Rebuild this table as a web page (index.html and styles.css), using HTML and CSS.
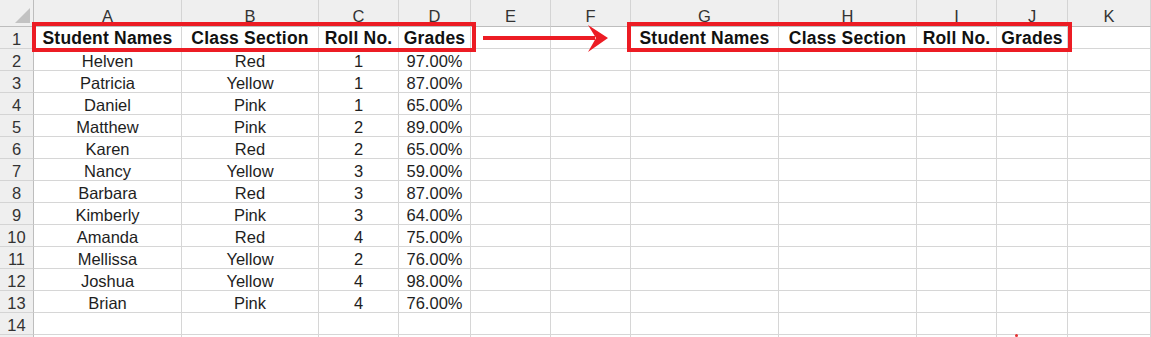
FILE: index.html
```html
<!DOCTYPE html>
<html>
<head>
<meta charset="utf-8">
<link rel="stylesheet" href="styles.css">
</head>
<body>
<div class="sheet">
  <div class="row colhdr">
    <div class="c corner"><span class="tri"></span></div>
    <div class="c">A</div><div class="c">B</div><div class="c">C</div><div class="c">D</div><div class="c">E</div><div class="c">F</div><div class="c">G</div><div class="c">H</div><div class="c">I</div><div class="c">J</div><div class="c">K</div>
  </div>
  <div class="row head">
    <div class="c rn">1</div>
    <div class="c">Student Names</div><div class="c">Class Section</div><div class="c">Roll No.</div><div class="c">Grades</div><div class="c"></div><div class="c"></div><div class="c">Student Names</div><div class="c">Class Section</div><div class="c">Roll No.</div><div class="c">Grades</div><div class="c"></div>
  </div>
  <div class="row"><div class="c rn">2</div><div class="c">Helven</div><div class="c">Red</div><div class="c">1</div><div class="c">97.00%</div><div class="c"></div><div class="c"></div><div class="c"></div><div class="c"></div><div class="c"></div><div class="c"></div><div class="c"></div></div>
  <div class="row"><div class="c rn">3</div><div class="c">Patricia</div><div class="c">Yellow</div><div class="c">1</div><div class="c">87.00%</div><div class="c"></div><div class="c"></div><div class="c"></div><div class="c"></div><div class="c"></div><div class="c"></div><div class="c"></div></div>
  <div class="row"><div class="c rn">4</div><div class="c">Daniel</div><div class="c">Pink</div><div class="c">1</div><div class="c">65.00%</div><div class="c"></div><div class="c"></div><div class="c"></div><div class="c"></div><div class="c"></div><div class="c"></div><div class="c"></div></div>
  <div class="row"><div class="c rn">5</div><div class="c">Matthew</div><div class="c">Pink</div><div class="c">2</div><div class="c">89.00%</div><div class="c"></div><div class="c"></div><div class="c"></div><div class="c"></div><div class="c"></div><div class="c"></div><div class="c"></div></div>
  <div class="row"><div class="c rn">6</div><div class="c">Karen</div><div class="c">Red</div><div class="c">2</div><div class="c">65.00%</div><div class="c"></div><div class="c"></div><div class="c"></div><div class="c"></div><div class="c"></div><div class="c"></div><div class="c"></div></div>
  <div class="row"><div class="c rn">7</div><div class="c">Nancy</div><div class="c">Yellow</div><div class="c">3</div><div class="c">59.00%</div><div class="c"></div><div class="c"></div><div class="c"></div><div class="c"></div><div class="c"></div><div class="c"></div><div class="c"></div></div>
  <div class="row"><div class="c rn">8</div><div class="c">Barbara</div><div class="c">Red</div><div class="c">3</div><div class="c">87.00%</div><div class="c"></div><div class="c"></div><div class="c"></div><div class="c"></div><div class="c"></div><div class="c"></div><div class="c"></div></div>
  <div class="row"><div class="c rn">9</div><div class="c">Kimberly</div><div class="c">Pink</div><div class="c">3</div><div class="c">64.00%</div><div class="c"></div><div class="c"></div><div class="c"></div><div class="c"></div><div class="c"></div><div class="c"></div><div class="c"></div></div>
  <div class="row"><div class="c rn">10</div><div class="c">Amanda</div><div class="c">Red</div><div class="c">4</div><div class="c">75.00%</div><div class="c"></div><div class="c"></div><div class="c"></div><div class="c"></div><div class="c"></div><div class="c"></div><div class="c"></div></div>
  <div class="row"><div class="c rn">11</div><div class="c">Mellissa</div><div class="c">Yellow</div><div class="c">2</div><div class="c">76.00%</div><div class="c"></div><div class="c"></div><div class="c"></div><div class="c"></div><div class="c"></div><div class="c"></div><div class="c"></div></div>
  <div class="row"><div class="c rn">12</div><div class="c">Joshua</div><div class="c">Yellow</div><div class="c">4</div><div class="c">98.00%</div><div class="c"></div><div class="c"></div><div class="c"></div><div class="c"></div><div class="c"></div><div class="c"></div><div class="c"></div></div>
  <div class="row"><div class="c rn">13</div><div class="c">Brian</div><div class="c">Pink</div><div class="c">4</div><div class="c">76.00%</div><div class="c"></div><div class="c"></div><div class="c"></div><div class="c"></div><div class="c"></div><div class="c"></div><div class="c"></div></div>
  <div class="row"><div class="c rn">14</div><div class="c"></div><div class="c"></div><div class="c"></div><div class="c"></div><div class="c"></div><div class="c"></div><div class="c"></div><div class="c"></div><div class="c"></div><div class="c"></div><div class="c"></div></div>
  <div class="row"><div class="c rn"></div><div class="c"></div><div class="c"></div><div class="c"></div><div class="c"></div><div class="c"></div><div class="c"></div><div class="c"></div><div class="c"></div><div class="c"></div><div class="c"></div><div class="c"></div></div>

  <div class="box box-src"></div>
  <div class="box box-dst"></div>
  <svg class="arrow" width="132" height="34" viewBox="0 0 132 34">
    <rect x="3" y="14" width="112" height="4" fill="#ec1c24"/>
    <polygon points="108,3 128,16 108,30 116,16" fill="#ec1c24"/>
  </svg>
  <span class="dot"></span>
</div>
</body>
</html>
```
FILE: styles.css
```css
html, body {
  margin: 0;
  padding: 0;
  background: #ffffff;
}
.sheet {
  position: relative;
  width: 1151px;
  height: 337px;
  overflow: hidden;
  font-family: "Liberation Sans", Arial, sans-serif;
  font-size: 16.5px;
  color: #1e1e1e;
}
.row {
  display: grid;
  grid-template-columns: 34px 148px 137px 80px 72px 80px 80px 148px 138px 80px 71px 83px;
  height: 22px;
}
.c {
  box-sizing: border-box;
  border-right: 1px solid #d6d6d6;
  border-bottom: 1px solid #d6d6d6;
  display: flex;
  align-items: center;
  justify-content: center;
  white-space: nowrap;
  overflow: visible;
  line-height: 1;
  padding-top: 3px;
}
.colhdr {
  height: 27px;
}
.colhdr .c {
  background: #efefef;
  color: #333333;
  border-right-color: #d4d4d4;
  border-bottom: 1px solid #bdbdbd;
  padding-top: 7px;
}
.colhdr .corner {
  position: relative;
  border-right-color: #bdbdbd;
}
.tri {
  position: absolute;
  right: 3px;
  bottom: 3px;
  width: 0;
  height: 0;
  border-left: 15px solid transparent;
  border-bottom: 15px solid #c2c2c2;
}
.rn {
  background: #efefef;
  color: #333333;
  border-right-color: #bdbdbd;
  border-bottom-color: #d4d4d4;
}
.head .c {
  font-weight: bold;
  font-size: 17.5px;
  letter-spacing: 0.2px;
  color: #111111;
}
.head .rn {
  font-weight: normal;
  font-size: 16.5px;
  letter-spacing: 0;
  color: #333333;
}
.box {
  position: absolute;
  top: 22px;
  height: 30px;
  box-sizing: border-box;
  border: 4px solid #ec1c24;
}
.box-src {
  left: 32px;
  width: 444px;
}
.box-dst {
  left: 627px;
  width: 445px;
}
.arrow {
  position: absolute;
  left: 480px;
  top: 22px;
}
.dot {
  position: absolute;
  left: 1015px;
  top: 334px;
  width: 3px;
  height: 3px;
  background: #e53030;
  border-radius: 50%;
}
```
